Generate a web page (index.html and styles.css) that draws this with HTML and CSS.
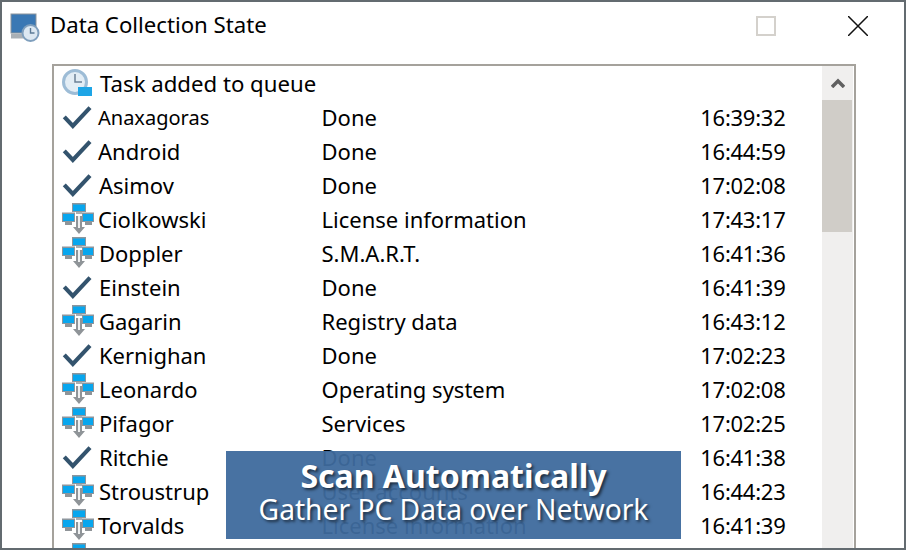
FILE: index.html
```html
<!DOCTYPE html>
<html>
<head>
  <meta charset="UTF-8">
  <title>Data Collection State</title>
  <link rel="stylesheet" href="styles.css">
</head>
<body>
  <svg class="defs" width="0" height="0">
    <symbol id="check" viewBox="0 0 28 24">
      <path d="M2 11 L9.500 19 L24.500 3" fill="none" stroke="#33536d" stroke-width="3.600"/>
    </symbol>
    <symbol id="net" viewBox="0 0 32 34">
      <rect x="10" y="0" width="14" height="9" fill="#8d969d"/>
      <rect x="11" y="1.500" width="12" height="6.500" fill="#08a6ee"/>
      <path d="M14 9h6v2h-6z" fill="#a9afb4"/>
      <rect x="0" y="9.500" width="13" height="9.500" fill="#8d969d"/>
      <rect x="1" y="11" width="11" height="7" fill="#08a6ee"/>
      <rect x="20" y="9.500" width="12" height="9.500" fill="#8d969d"/>
      <rect x="21" y="11" width="10" height="7" fill="#08a6ee"/>
      <path d="M3 19h7v3H3zM23 19h7v3h-7z" fill="#8f9498"/>
      <path d="M14 13h6v11h3l-6 7-6-7h3z" fill="#8f9498"/>
      <path d="M16 13h2v12h-2z" fill="#eef0f1"/>
    </symbol>
  </svg>

  <div class="window">
    <div class="titlebar">
      <svg class="app-icon" width="30" height="30" viewBox="0 0 30 30">
        <rect x="1" y="1" width="25" height="19" fill="#3a78b4" stroke="#8b949c"/>
        <path d="M1 23h21" stroke="#a9b0b6" stroke-width="5"/>
        <circle cx="20.500" cy="20" r="8" fill="#dce8f2" stroke="#7f9fbd" stroke-width="2"/>
        <path d="M20.500 15v5h4" fill="none" stroke="#5b7a96" stroke-width="1.400"/>
      </svg>
      <span class="title">Data Collection State</span>
      <span class="maximize"></span>
      <svg class="close" width="20" height="20" viewBox="0 0 20 20">
        <path d="M0 0L20 20M20 0L0 20" stroke="#111" stroke-width="1.500"/>
      </svg>
    </div>

    <div class="listbox">
      <div class="list">
        <div class="queue">
          <svg class="queue-icon" width="34" height="30" viewBox="0 0 34 30">
            <circle cx="13" cy="13" r="11.500" fill="#e3edf5" stroke="#9dbcd6" stroke-width="3"/>
            <path d="M13 5v8h7" fill="none" stroke="#6d8196" stroke-width="1.500"/>
            <rect x="16" y="18" width="14" height="9" fill="#1ea5e6"/>
          </svg>
          <span class="queue-text">Task added to queue</span>
        </div>
        <div class="row"><svg class="ico"><use href="#check"/></svg><span class="name tight small">Anaxagoras</span><span class="state">Done</span><span class="time">16:39:32</span></div>
        <div class="row"><svg class="ico"><use href="#check"/></svg><span class="name tight">Android</span><span class="state">Done</span><span class="time">16:44:59</span></div>
        <div class="row"><svg class="ico"><use href="#check"/></svg><span class="name">Asimov</span><span class="state">Done</span><span class="time">17:02:08</span></div>
        <div class="row"><svg class="ico"><use href="#net"/></svg><span class="name tight">Ciolkowski</span><span class="state">License information</span><span class="time">17:43:17</span></div>
        <div class="row"><svg class="ico"><use href="#net"/></svg><span class="name">Doppler</span><span class="state">S.M.A.R.T.</span><span class="time">16:41:36</span></div>
        <div class="row"><svg class="ico"><use href="#check"/></svg><span class="name">Einstein</span><span class="state">Done</span><span class="time">16:41:39</span></div>
        <div class="row"><svg class="ico"><use href="#net"/></svg><span class="name">Gagarin</span><span class="state">Registry data</span><span class="time">16:43:12</span></div>
        <div class="row"><svg class="ico"><use href="#check"/></svg><span class="name">Kernighan</span><span class="state">Done</span><span class="time">17:02:23</span></div>
        <div class="row"><svg class="ico"><use href="#net"/></svg><span class="name">Leonardo</span><span class="state">Operating system</span><span class="time">17:02:08</span></div>
        <div class="row"><svg class="ico"><use href="#net"/></svg><span class="name">Pifagor</span><span class="state">Services</span><span class="time">17:02:25</span></div>
        <div class="row"><svg class="ico"><use href="#check"/></svg><span class="name">Ritchie</span><span class="state">Done</span><span class="time">16:41:38</span></div>
        <div class="row"><svg class="ico"><use href="#net"/></svg><span class="name">Stroustrup</span><span class="state">User accounts</span><span class="time">16:44:23</span></div>
        <div class="row"><svg class="ico"><use href="#net"/></svg><span class="name tight">Torvalds</span><span class="state">License information</span><span class="time">16:41:39</span></div>
        <div class="row"><svg class="ico"><use href="#net"/></svg></div>
      </div>
      <div class="scrollbar">
        <div class="arrow">
          <svg width="14" height="10" viewBox="0 0 14 10"><path d="M1 9L7 3L13 9" fill="none" stroke="#606060" stroke-width="3.500"/></svg>
        </div>
        <div class="thumb"></div>
      </div>
    </div>
  </div>

  <div class="banner">
    <div class="banner-title">Scan Automatically</div>
    <div class="banner-sub">Gather PC Data over Network</div>
  </div>
</body>
</html>
```

FILE: styles.css
```css
html, body {
  margin: 0;
  padding: 0;
}
body {
  position: relative;
  width: 906px;
  height: 550px;
  overflow: hidden;
  background: #fff;
  font-family: "Noto Sans", "Open Sans", sans-serif;
  font-size: 22px;
  color: #000;
}
.defs {
  display: block;
  height: 0;
}
.window {
  box-sizing: border-box;
  width: 906px;
  height: 550px;
  border: 2px solid #636b70;
  display: flex;
  flex-direction: column;
  overflow: hidden;
}
.titlebar {
  height: 62px;
  flex: none;
  display: flex;
  align-items: flex-start;
  padding: 11px 36px 0 8px;
  box-sizing: border-box;
}
.app-icon {
  flex: none;
}
.title {
  margin-left: 10px;
  font-size: 22.200px;
  line-height: 24px;
  flex: 1;
}
.maximize {
  width: 16px;
  height: 16px;
  margin: 3px 72px 0 0;
  border: 2px solid #d4d1cc;
}
.close {
  margin-top: 3px;
}
.listbox {
  margin-left: 50px;
  width: 804px;
  box-sizing: border-box;
  flex: 1;
  min-height: 0;
  border: 2px solid #a5a29c;
  border-bottom: none;
  display: flex;
  overflow: hidden;
}
.list {
  flex: 1;
  min-width: 0;
  padding-top: 1px;
}
.queue {
  height: 34px;
  display: flex;
  align-items: center;
  padding-left: 8px;
}
.queue-icon {
  margin-right: 4px;
}
.queue-text {
  font-size: 22.200px;
  margin-bottom: 2px;
}
.row {
  height: 34px;
  display: flex;
  align-items: center;
  padding-left: 8px;
}
.ico {
  width: 32px;
  height: 34px;
  flex: none;
}
.name, .state, .time {
  margin-bottom: 2px;
}
.name {
  width: 225px;
  margin-left: 5px;
}
.name.tight {
  margin-left: 4px;
  margin-right: 1px;
}
.name.small {
  font-size: 20px;
}
.state {
  width: 346px;
}
.time {
  width: 160px;
  text-align: center;
  letter-spacing: -0.25px;
}
.scrollbar {
  width: 31px;
  flex: none;
  background: #f0efee;
  margin-right: 1px;
}
.arrow {
  height: 34px;
  display: flex;
  align-items: center;
  justify-content: center;
}
.thumb {
  height: 132px;
  margin-right: 1px;
  background: #d0cdc8;
}
.banner {
  position: absolute;
  left: 226px;
  top: 451px;
  width: 455px;
  height: 88px;
  background: rgba(62, 106, 157, 0.95);
  color: #fff;
  text-align: center;
  text-shadow: 2px 2px 3px rgba(0, 0, 0, 0.6);
}
.banner-title {
  font-size: 32px;
  font-weight: 700;
  line-height: 50px;
}
.banner-sub {
  font-size: 28.200px;
  line-height: 30px;
  margin-top: -7px;
}
```
